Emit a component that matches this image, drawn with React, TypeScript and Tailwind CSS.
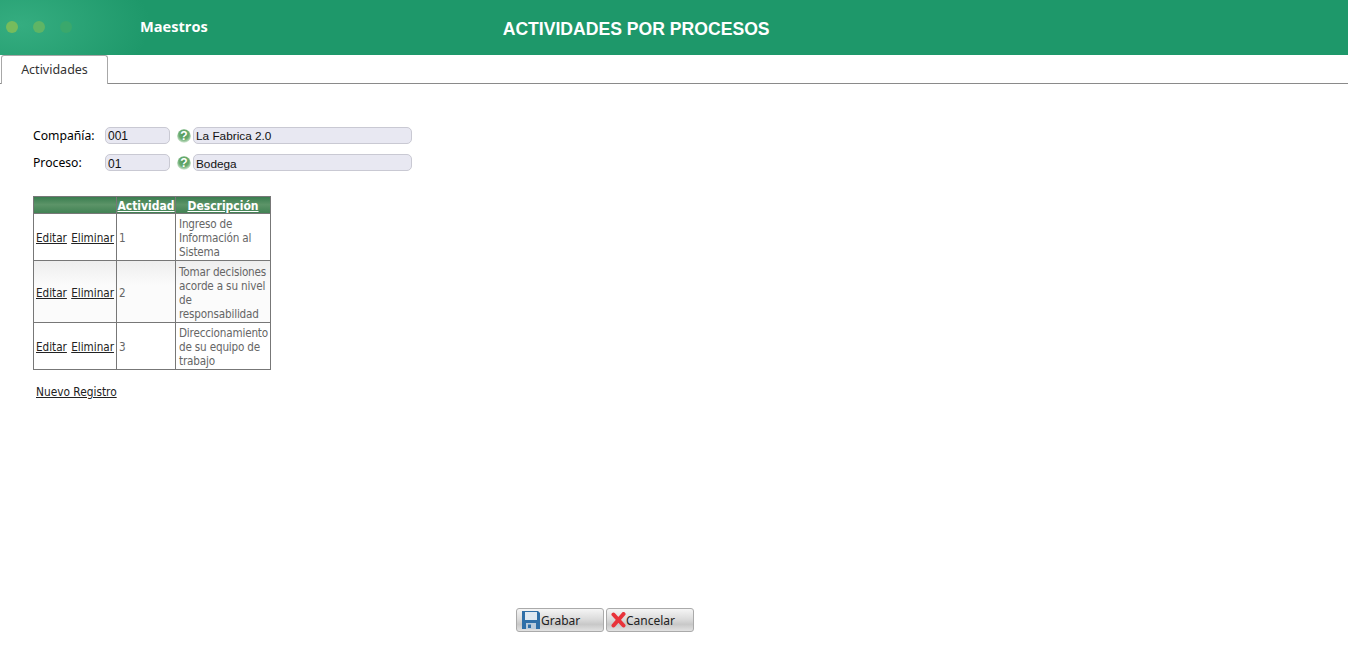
import React from 'react';

const labelFont = 'font-["Noto_Sans","DejaVu_Sans",sans-serif]';
const tableFont = 'font-["DejaVu_Sans_Condensed","DejaVu_Sans",sans-serif]';

function HelpIcon() {
  return (
    <svg width="14" height="14" viewBox="0 0 14 14" className="shrink-0 mt-[1px]">
      <defs>
        <radialGradient id="help" cx="50%" cy="40%" r="60%">
          <stop offset="0%" stopColor="#4f9657" />
          <stop offset="60%" stopColor="#68ab6f" />
          <stop offset="100%" stopColor="#d5e8d5" />
        </radialGradient>
      </defs>
      <circle cx="7" cy="7" r="6.8" fill="url(#help)" />
      <text x="7" y="11.2" textAnchor="middle" fontSize="12" fontWeight="700" fill="#fff" fontFamily="Liberation Sans, sans-serif">?</text>
    </svg>
  );
}

function Field({ label, code, name, top, textOffset }: { label: string; code: string; name: string; top: string; textOffset: string }) {
  return (
    <div className={`flex items-center h-[18px] ${top}`}>
      <span className={`w-[72px] pt-[2px] text-[12.2px] text-black ${labelFont}`}>{label}</span>
      <span className={`w-[65px] h-[17px] rounded-[5px] border border-[#c9c9d3] bg-[#e8e8f2] pl-[2px] text-[12px] text-[#111] font-['Liberation_Sans',sans-serif] ${textOffset}`}>{code}</span>
      <span className="ml-[7px] mr-[2px]"><HelpIcon /></span>
      <span className={`w-[219px] h-[17px] rounded-[5px] border border-[#c9c9d3] bg-[#e8e8f2] pl-[2px] text-[11.8px] text-[#111] font-['Liberation_Sans',sans-serif] ${textOffset}`}>{name}</span>
    </div>
  );
}

const rows = [
  { id: '1', desc: ['Ingreso de', 'Información al', 'Sistema'], h: 'h-[47px]', alt: false },
  { id: '2', desc: ['Tomar decisiones', 'acorde a su nivel', 'de', 'responsabilidad'], h: 'h-[62px]', alt: true },
  { id: '3', desc: ['Direccionamiento', 'de su equipo de', 'trabajo'], h: 'h-[47px]', alt: false },
];

export default function App() {
  return (
    <div className="w-[1348px] h-[657px] bg-white overflow-hidden flex flex-col">
      {/* header */}
      <div className="relative h-[55px] shrink-0 flex items-center bg-[#1e986a]">
        <div className="absolute inset-0 bg-[radial-gradient(ellipse_130px_70px_at_20px_25px,#35ad80,#1e986a)]" />
        <div className="relative flex gap-[15px] pl-[6px] pb-[1px] w-[140px]">
          <span className="w-[12px] h-[12px] rounded-full bg-[#76bc5c]" />
          <span className="w-[12px] h-[12px] rounded-full bg-[#5fb565]" />
          <span className="w-[12px] h-[12px] rounded-full bg-[#3aa86c]" />
        </div>
        <span className="relative text-[14.6px] font-bold text-white font-['Open_Sans',sans-serif] -mt-[2px]">Maestros</span>
        <span className="relative ml-[295px] text-[17.6px] font-bold text-white font-['Liberation_Sans',sans-serif] mt-[3px]">ACTIVIDADES POR PROCESOS</span>
      </div>

      {/* tabs */}
      <div className="h-[29px] shrink-0 border-b border-[#8a8a8a] pl-px">
        <div className={`w-[107px] h-[29px] border border-b-0 border-[#a8a8a8] rounded-t-[3px] bg-white text-center text-[12.5px] leading-[28px] text-[#333] ${labelFont}`}>Actividades</div>
      </div>

      <div className="flex-1 flex flex-col pl-[33px]">
        <Field label="Compañía:" code="001" name="La Fabrica 2.0" top="mt-[42px]" textOffset="leading-[16px]" />
        <Field label="Proceso:" code="01" name="Bodega" top="mt-[9px]" textOffset="leading-[18px]" />

        <table className={`mt-[25px] w-[237px] border-collapse border border-[#777] text-[11.6px] leading-[14px] text-[#666] table-fixed ${tableFont}`}>
          <colgroup>
            <col className="w-[83px]" />
            <col className="w-[59px]" />
            <col className="w-[95px]" />
          </colgroup>
          <thead>
            <tr className="h-[17px] bg-[linear-gradient(#3a7d4f,#5c9468_45%,#3f8052)] text-white">
              <th className="border border-[#777] p-0" />
              <th className="border border-[#777] pt-[2px] pb-0 px-0 font-bold underline text-[12px]">Actividad</th>
              <th className="border border-[#777] pt-[2px] pb-0 px-0 font-bold underline text-[12px]">Descripción</th>
            </tr>
          </thead>
          <tbody>
            {rows.map((r) => (
              <tr key={r.id} className={`${r.h} ${r.alt ? 'bg-[linear-gradient(#eeeeee,#fbfbfb_40%)]' : 'bg-white'}`}>
                <td className="border border-[#777] px-[2px] pt-[2px] pb-0 whitespace-nowrap text-[#222]">
                  <a className="underline">Editar</a> <a className="underline ml-px">Eliminar</a>
                </td>
                <td className="border border-[#777] px-[2px] pt-[2px] pb-0">{r.id}</td>
                <td className="border border-[#777] pl-[3px] pr-0 pt-[2px] pb-0 whitespace-nowrap tracking-[-0.17px]">
                  {r.desc.map((l) => (
                    <div key={l}>{l}</div>
                  ))}
                </td>
              </tr>
            ))}
          </tbody>
        </table>

        <a className={`mt-[14px] ml-[3px] text-[11.8px] leading-[16px] text-[#222] underline ${tableFont}`}>Nuevo Registro</a>

        <div className="mt-[208px] ml-[483px] flex gap-[2px]">
          <button className={`w-[88px] h-[24px] flex items-center pl-[4px] rounded-[3px] border border-[#aaa] bg-[linear-gradient(#f5f5f5,#dcdcdc_45%,#c8c8c8_70%,#e2e2e2)] text-[12px] text-[#222] ${labelFont}`}>
            <svg width="20" height="20" viewBox="0 0 20 20" className="shrink-0">
              <path d="M1 1h16l2 2v16H1z" fill="#2f6fa8" />
              <rect x="4" y="2" width="12" height="8" fill="#dfe9f2" />
              <rect x="5" y="13" width="10" height="6" fill="#b9cbdc" />
              <rect x="7" y="14.5" width="3" height="3.5" fill="#2f6fa8" />
            </svg>
            <span className="pt-[2px]">Grabar</span>
          </button>
          <button className={`w-[88px] h-[24px] flex items-center pl-[4px] rounded-[3px] border border-[#aaa] bg-[linear-gradient(#f5f5f5,#dcdcdc_45%,#c8c8c8_70%,#e2e2e2)] text-[12px] text-[#222] ${labelFont}`}>
            <svg width="15" height="16" viewBox="0 0 15 16" className="shrink-0">
              <path d="M2.5 2.5 L12.5 13.5 M12.5 2 L2.5 13.5" stroke="#e8333a" strokeWidth="4" strokeLinecap="round" />
            </svg>
            <span className="pt-[2px]">Cancelar</span>
          </button>
        </div>
      </div>
    </div>
  );
}
